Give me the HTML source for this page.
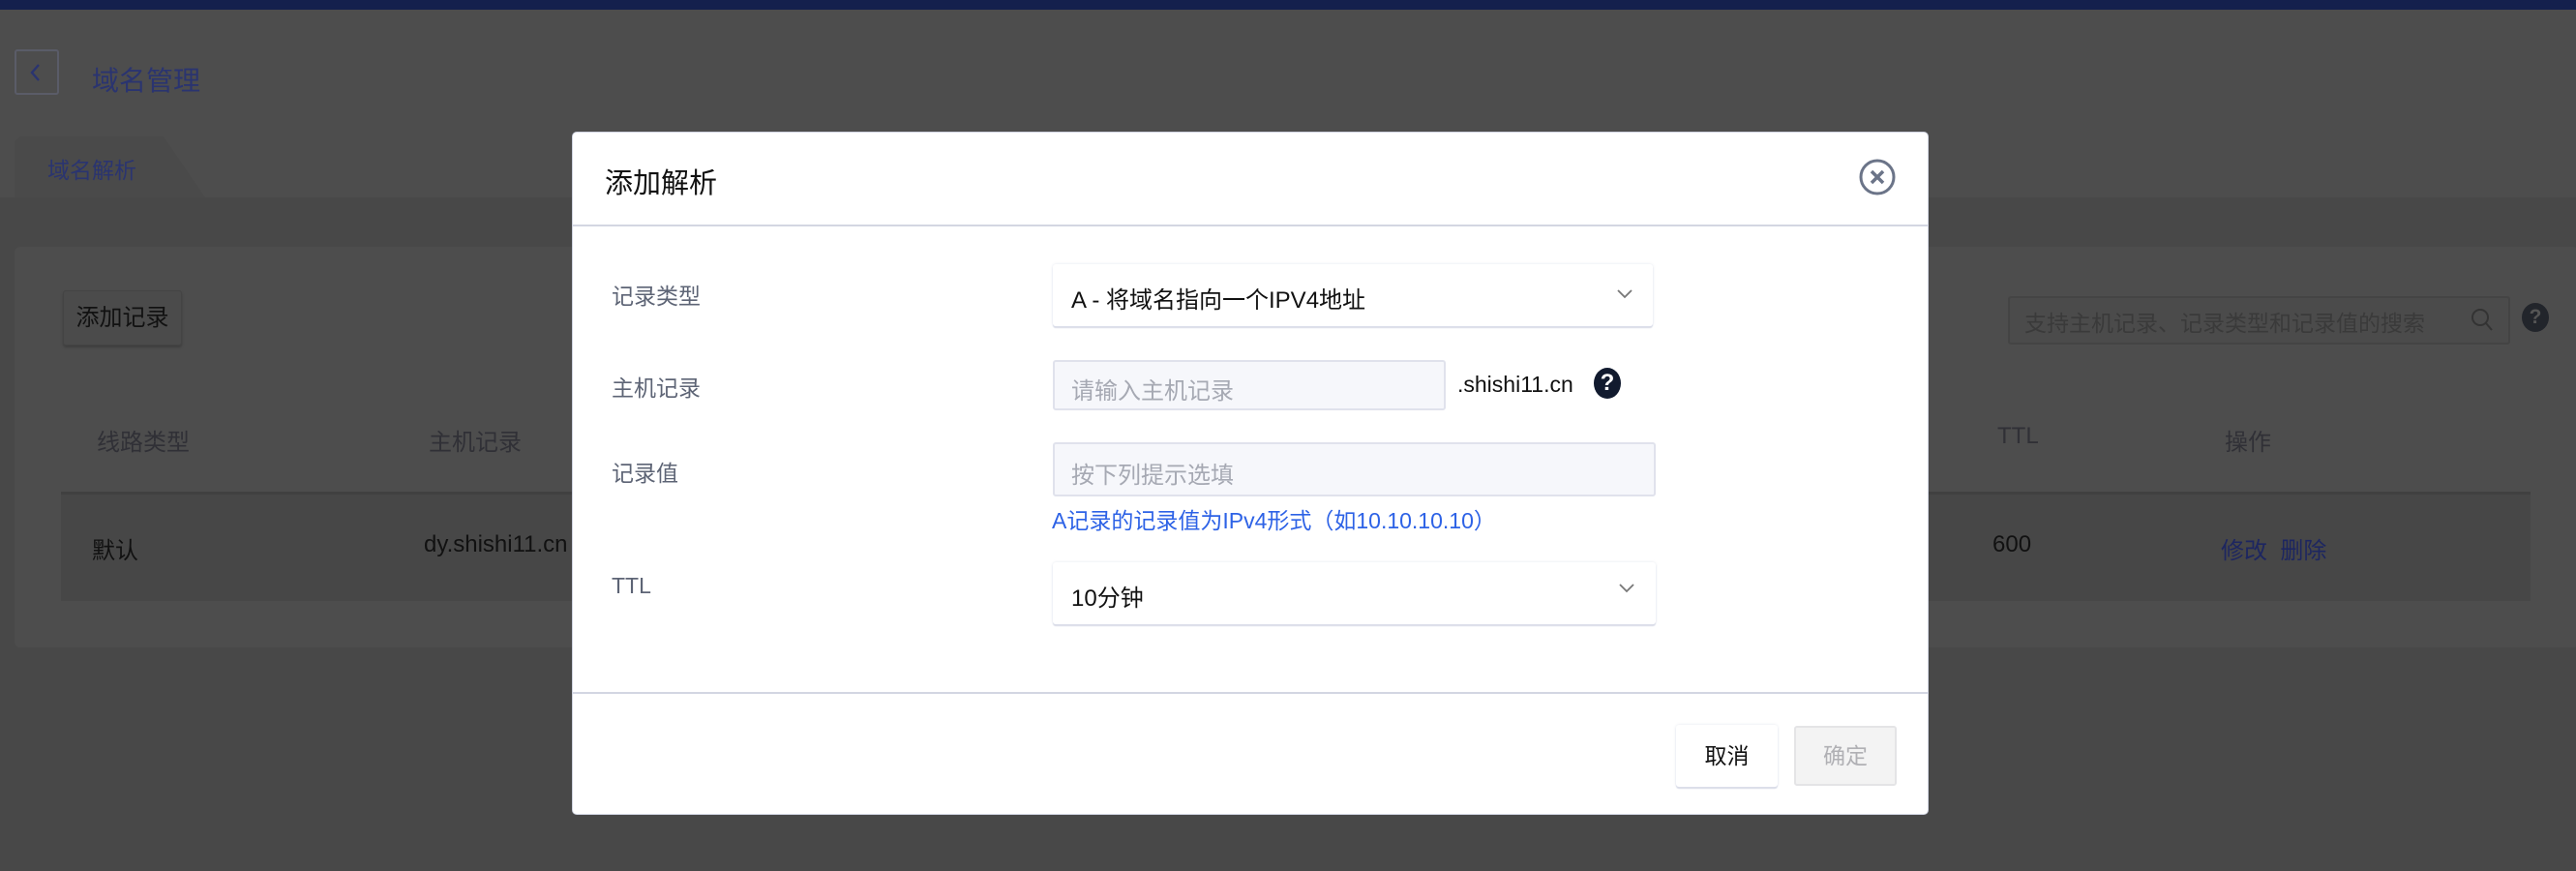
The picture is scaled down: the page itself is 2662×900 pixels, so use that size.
<!DOCTYPE html>
<html><head><meta charset="utf-8"><style>
*{box-sizing:border-box;margin:0;padding:0}
body{width:2662px;height:900px;overflow:hidden;background:#484848;font-family:"Liberation Sans","Noto Sans CJK SC",sans-serif;position:relative}
.a{position:absolute}
.lbl{color:#5d6475;font-size:23px}
.bg{font-size:24px}
</style></head><body>
<div class="a" style="left:0;top:0;width:2662px;height:10px;background:#14204d"></div>
<div class="a" style="left:0;top:10px;width:2662px;height:194px;background:#4d4d4d"></div>
<div class="a" style="left:15px;top:51px;width:46px;height:47px;border:2px solid #5a5c68;border-radius:3px"></div>
<svg class="a" style="left:29px;top:64px" width="16" height="22"><path d="M11 3 L4 11 L11 19" stroke="#2a3470" stroke-width="2.4" fill="none"/></svg>
<div class="a" style="left:95px;top:62px;font-size:28px;color:#2a3470">域名管理</div>
<div class="a" style="left:15px;top:141px;width:197px;height:63px;background:#4a4a4a;clip-path:polygon(0 8%,3% 0,78% 0,100% 100%,0 100%)"></div>
<div class="a" style="left:49px;top:157px;font-size:23px;color:#2a3470">域名解析</div>
<div class="a" style="left:15px;top:255px;width:2650px;height:414px;background:#4d4d4d;border-radius:6px"></div>
<div class="a" style="left:65px;top:300px;width:123px;height:57px;background:#4b4b4b;border:1px solid #444;box-shadow:0 2px 2px #3e3e3e;border-radius:3px;font-size:24px;line-height:55px;text-align:center;color:#111">添加记录</div>
<div class="a bg" style="left:100px;top:437px;color:#303036">线路类型</div>
<div class="a bg" style="left:443px;top:437px;color:#303036">主机记录</div>
<div class="a bg" style="left:2064px;top:437px;color:#303036">TTL</div>
<div class="a bg" style="left:2299px;top:437px;color:#303036">操作</div>
<div class="a" style="left:63px;top:508px;width:2552px;height:113px;background:#474747;border-top:3px solid #404040"></div>
<div class="a bg" style="left:95px;top:549px;color:#111">默认</div>
<div class="a bg" style="left:438px;top:549px;color:#111">dy.shishi11.cn</div>
<div class="a bg" style="left:2059px;top:549px;color:#111">600</div>
<div class="a bg" style="left:2295px;top:549px;color:#1d2660">修改&nbsp;&nbsp;删除</div>
<div class="a" style="left:2075px;top:306px;width:519px;height:50px;border:2px solid #444;background:#4b4b4b;border-radius:3px"></div>
<div class="a" style="left:2092px;top:315px;font-size:23px;color:#3a3a3a">支持主机记录、记录类型和记录值的搜索</div>
<svg class="a" style="left:2553px;top:318px" width="24" height="26"><circle cx="10" cy="10" r="8" stroke="#333" stroke-width="2" fill="none"/><path d="M16 16 L22 23" stroke="#333" stroke-width="2"/></svg>
<div class="a" style="left:2606px;top:313px;width:28px;height:30px;border-radius:50%;background:#22252b;color:#555;font-size:21px;font-weight:bold;text-align:center;line-height:30px">?</div>

<div class="a" style="left:591px;top:136px;width:1402px;height:706px;background:#fff;border-radius:5px;border:1px solid #d0d4e0"></div>
<div class="a" style="left:625px;top:166px;font-size:29px;color:#111">添加解析</div>
<svg class="a" style="left:1920px;top:163px" width="40" height="40"><circle cx="20" cy="20" r="17" stroke="#6b7488" stroke-width="3" fill="none"/><path d="M14 14 L26 26 M26 14 L14 26" stroke="#6b7488" stroke-width="3.5"/></svg>
<div class="a" style="left:592px;top:232px;width:1400px;height:2px;background:#d3d6e2"></div>
<div class="a lbl" style="left:632px;top:287px">记录类型</div>
<div class="a lbl" style="left:632px;top:382px">主机记录</div>
<div class="a lbl" style="left:632px;top:470px">记录值</div>
<div class="a lbl" style="left:632px;top:592px">TTL</div>
<div class="a" style="left:1088px;top:273px;width:620px;height:64px;background:#fff;border-radius:3px;box-shadow:0 0 3px #e4e6ee,0 2px 1px #d6d9e6"></div>
<div class="a" style="left:1107px;top:290px;font-size:24px;color:#111">A - 将域名指向一个IPV4地址</div>
<svg class="a" style="left:1670px;top:298px" width="18" height="12"><path d="M2 2 L9 9 L16 2" stroke="#777" stroke-width="1.8" fill="none"/></svg>
<div class="a" style="left:1088px;top:372px;width:406px;height:52px;background:#f6f7fb;border:2px solid #e0e2ec;border-radius:3px"></div>
<div class="a" style="left:1107px;top:384px;font-size:24px;color:#a6a9b3">请输入主机记录</div>
<div class="a" style="left:1506px;top:384px;font-size:23px;color:#111">.shishi11.cn</div>
<div class="a" style="left:1647px;top:380px;width:28px;height:32px;border-radius:50%;background:#111a2e;color:#fff;font-size:24px;font-weight:bold;text-align:center;line-height:32px">?</div>
<div class="a" style="left:1088px;top:457px;width:623px;height:56px;background:#f6f7fb;border:2px solid #e0e2ec;border-radius:3px"></div>
<div class="a" style="left:1107px;top:471px;font-size:24px;color:#a6a9b3">按下列提示选填</div>
<div class="a" style="left:1087px;top:519px;font-size:23px;color:#2d62e6">A记录的记录值为IPv4形式（如10.10.10.10）</div>
<div class="a" style="left:1088px;top:581px;width:623px;height:64px;background:#fff;border-radius:3px;box-shadow:0 0 3px #e4e6ee,0 2px 1px #d6d9e6"></div>
<div class="a" style="left:1107px;top:598px;font-size:24px;color:#111">10分钟</div>
<svg class="a" style="left:1672px;top:602px" width="18" height="12"><path d="M2 2 L9 9 L16 2" stroke="#777" stroke-width="1.8" fill="none"/></svg>
<div class="a" style="left:592px;top:715px;width:1400px;height:2px;background:#d3d6e2"></div>
<div class="a" style="left:1732px;top:749px;width:105px;height:64px;background:#fff;border-radius:3px;box-shadow:0 0 3px #e4e6ee,0 2px 1px #d6d9e6;font-size:23px;line-height:64px;text-align:center;color:#111">取消</div>
<div class="a" style="left:1854px;top:750px;width:106px;height:62px;background:#f3f3f3;border:2px solid #e4e4e6;border-radius:3px;font-size:23px;line-height:58px;text-align:center;color:#b0b0b4">确定</div>
</body></html>
